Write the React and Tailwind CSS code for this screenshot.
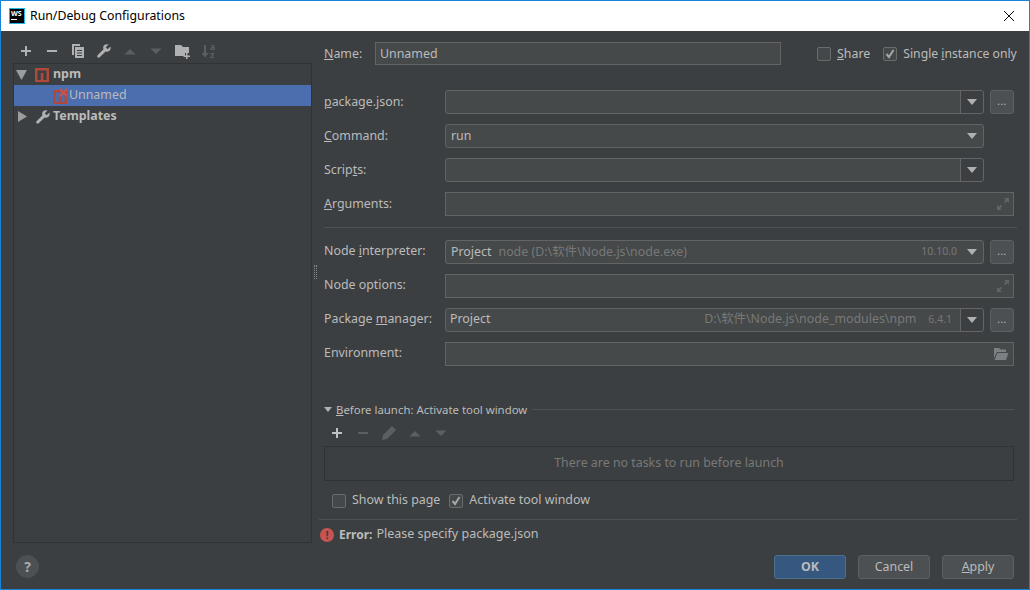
import React from 'react';

const CJK = '"Noto Sans", "Noto Sans CJK SC", sans-serif';

const Tool = ({ children, className = '' }) => (
  <svg width="16" height="16" viewBox="0 0 16 16" className={className}>{children}</svg>
);

const Plus = ({ c = '#afb1b3' }) => <Tool><path d="M7 3h2v4h4v2H9v4H7V9H3V7h4z" fill={c} /></Tool>;
const Minus = ({ c = '#afb1b3' }) => <Tool><path d="M3 7h10v2H3z" fill={c} /></Tool>;
const Up = ({ c = '#5c5f61' }) => <Tool><path d="M2.500 11.500L8 6l5.500 5.500z" fill={c} /></Tool>;
const Down = ({ c = '#5c5f61' }) => <Tool><path d="M2.500 5.500L8 11l5.500-5.500z" fill={c} /></Tool>;
const Wrench = ({ c = '#afb1b3' }) => (
  <Tool><path d="M14.500 3.500l-2.800 2.700-1.900-1.900L12.500 1.600C10.600.9 8.300 1.500 7.500 3.300c-.5 1-.4 2.100 0 3L1.600 12.200c-.6.600-.6 1.500 0 2.100.6.600 1.500.6 2.100 0l5.900-5.900c1 .4 2.200.4 3.100-.1 1.700-.9 2.400-3 1.800-4.800z" fill={c} /></Tool>
);
const Copy = () => (
  <Tool><path d="M2 1h8v2H4v9H2z" fill="#afb1b3" /><path d="M5 4h9v11H5zm2 3v1h5V7zm0 2.500v1h5v-1zm0 2.500v1h5v-1z" fill="#afb1b3" fillRule="evenodd" /></Tool>
);
const FolderPlus = () => (
  <Tool><path d="M1 2h6l2 2h6v6h-4v3H1z" fill="#afb1b3" /><path d="M12 10h1.500v2.500H16V14h-2.500v2H12v-2H9.500v-1.500H12z" fill="#afb1b3" /></Tool>
);
const SortAz = () => (
  <svg width="18" height="18" viewBox="0 0 18 18">
    <path d="M4 3h2v8h2.500L5 15.500 1.500 11H4z" fill="#5c5f61" />
    <text x="10" y="8" fontSize="8.500" fontWeight="700" fontFamily="Noto Sans" fill="#5c5f61">a</text>
    <text x="10" y="16" fontSize="8.500" fontWeight="700" fontFamily="Noto Sans" fill="#5c5f61">z</text>
  </svg>
);
const Npm = () => (
  <svg width="14" height="14" viewBox="0 0 14 14">
    <path d="M0 0h14v14H0zM2.500 2.500V12h9V2.500z" fill="#b0493a" fillRule="evenodd" />
    <path d="M5.800 5h2.600v8H5.800z" fill="#b0493a" />
  </svg>
);
const Expand = () => (
  <svg width="14" height="14" viewBox="0 0 14 14" fill="#5f6465">
    <path d="M8 1h5v5l-1.800-1.800-2 2-1.400-1.400 2-2zM6 13H1V8l1.800 1.800 2-2 1.400 1.400-2 2z" />
  </svg>
);
const Folder = () => (
  <svg width="16" height="14" viewBox="0 0 16 14" fill="#7d8082">
    <path d="M1 1h5l1.500 1.500H13V5H4L1 11z" />
    <path d="M4.500 6H15.500l-2.500 7H1.500z" />
  </svg>
);

const Caret = () => (
  <svg width="12" height="8" viewBox="0 0 12 8"><path d="M1 1h10L6 7z" fill="#aeb0b2" /></svg>
);

const CheckBox = ({ checked }) => (
  <span className="w-[14px] h-[14px] rounded-[2px] border border-[#6b6b6b] bg-[#43494a] flex items-center justify-center shrink-0">
    {checked && (
      <svg width="12" height="12" viewBox="0 0 12 12"><path d="M2.500 6l2.500 3 4.500-7" fill="none" stroke="#a7a7a7" strokeWidth="2" /></svg>
    )}
  </span>
);

const Label = ({ children }) => <div className="w-[121px] shrink-0">{children}</div>;

const Field = ({ children, className = 'w-[569px]', round }) => (
  <div className={`h-[24px] border border-[#646464] bg-[#45494a] flex items-center shrink-0 ${round ? 'rounded-[3px]' : ''} ${className}`}>
    {children}
  </div>
);

const Dots = () => (
  <div className="w-[24px] h-[24px] ml-[6px] rounded-[3px] border border-[#5e6060] bg-[#4c5052] flex items-end justify-center pb-[7px] text-[#bbbbbb] text-[10px] leading-none tracking-[0.5px] shrink-0">...</div>
);

const Row = ({ label, children }) => (
  <div className="flex items-center h-[24px]">
    <Label>{label}</Label>
    {children}
  </div>
);

const Btn = ({ children, primary }) => (
  <div className={`w-[72px] h-[24px] pt-px rounded-[3px] border flex items-center justify-center ${primary ? 'bg-[#365880] border-[#4c708c] font-bold' : 'bg-[#4c5052] border-[#5e6060]'}`}>
    {children}
  </div>
);

const App = () => {
  return (
    <div className="w-[1030px] h-[590px] border border-[#1883d7] flex flex-col bg-[#3c3f41] text-[#bbbbbb] text-[12.4px] overflow-hidden" style={{ fontFamily: CJK }}>
      {/* title bar */}
      <div className="h-[30px] bg-white text-black flex items-center shrink-0 pl-[8px] pr-[14px]">
        <div className="w-[16px] h-[16px] bg-black border border-[#25b5e6] text-white text-[7px] font-bold leading-[9px] px-[1px] shrink-0">
          WS
          <div className="w-[6px] h-px bg-white mt-[1px]" />
        </div>
        <div className="ml-[5px] text-[12.3px]">Run/Debug Configurations</div>
        <svg className="ml-auto" width="12" height="12" viewBox="0 0 12 12"><path d="M1 1l10 10M11 1L1 11" stroke="#111" strokeWidth="1" /></svg>
      </div>

      <div className="flex-1 flex min-h-0">
        {/* left side */}
        <div className="w-[299px] ml-[12px] flex flex-col shrink-0">
          <div className="h-[32px] flex items-center pl-[5px] pt-[7px] gap-[10px] shrink-0">
            <Plus />
            <Minus />
            <Copy />
            <Wrench />
            <Up />
            <Down />
            <FolderPlus />
            <SortAz />
          </div>
          <div className="flex-1 border border-[#323232] pb-[1px]">
            <div className="h-[21px] flex items-center pl-[2px] font-bold">
              <svg width="11" height="10" viewBox="0 0 11 10"><path d="M0 0h11L5.500 10z" fill="#9a9c9e" /></svg>
              <span className="ml-[8px] flex"><Npm /></span>
              <span className="ml-[4px]">npm</span>
            </div>
            <div className="h-[21px] flex items-center pl-[39px] bg-[#4b6eaf] relative">
              <span className="flex mt-[3px]"><Npm /></span>
              <svg className="absolute left-[45px] top-[3px]" width="9" height="9" viewBox="0 0 9 9"><path d="M1 1l7 7M8 1L1 8" stroke="#c75450" strokeWidth="2" /></svg>
              <span className="ml-[2px]">Unnamed</span>
            </div>
            <div className="h-[21px] flex items-center pl-[4px] font-bold">
              <svg width="9" height="11" viewBox="0 0 9 11"><path d="M0 0l9 5.500L0 11z" fill="#9a9c9e" /></svg>
              <span className="ml-[8px] flex"><Wrench /></span>
              <span className="ml-[2px]">Templates</span>
            </div>
          </div>
        </div>

        {/* splitter */}
        <div className="w-[7px] shrink-0 flex items-center justify-center">
          <div className="w-[3px] h-[14px] mb-[30px] border-x border-dotted border-[#8a8a8a]" />
        </div>

        {/* right side */}
        <div className="flex-1 flex flex-col min-w-0 pr-[12px]">
          <div className="pl-[5px]">
            <div className="flex items-center h-[23px] mt-[11px]">
              <div className="w-[51px] shrink-0 pt-px"><u>N</u>ame:</div>
              <div className="w-[406px] h-[23px] border border-[#646464] bg-[#45494a] flex items-center pl-[4px] pt-px shrink-0">Unnamed</div>
              <span className="ml-[36px] mt-[1px]"><CheckBox /></span>
              <span className="ml-[6px] mt-[2px]"><u>S</u>hare</span>
              <span className="ml-[13px] mt-[1px]"><CheckBox checked /></span>
              <span className="ml-[6px] mt-[2px] whitespace-nowrap text-[12.2px]">Single <u>i</u>nstance only</span>
            </div>

            <div className="mt-[25px] flex flex-col gap-[10px]">
              <Row label={<span className="block pt-px"><u>p</u>ackage.json:</span>}>
                <Field round className="w-[539px] justify-end">
                  <div className="w-[23px] h-full border-l border-[#646464] bg-[#3c3f41] rounded-r-[3px] flex items-center justify-center"><Caret /></div>
                </Field>
                <Dots />
              </Row>
              <Row label={<><u>C</u>ommand:</>}>
                <Field round className="w-[539px] pl-[5px] pr-[5px] bg-[#3c3f41] justify-between">
                  <span className="pt-px">run</span>
                  <Caret />
                </Field>
              </Row>
              <Row label={<>Scrip<u>t</u>s:</>}>
                <Field round className="w-[539px] justify-end">
                  <div className="w-[23px] h-full border-l border-[#646464] bg-[#3c3f41] rounded-r-[3px] flex items-center justify-center"><Caret /></div>
                </Field>
              </Row>
              <Row label={<><u>A</u>rguments:</>}>
                <Field className="w-[569px] justify-end pr-[3px]"><Expand /></Field>
              </Row>
            </div>
          </div>

          <div className="h-px bg-[#515151] mt-[11px] ml-[5px]" />

          <div className="pl-[5px] mt-[12px] flex flex-col gap-[10px]">
            <Row label={<>Node <u>i</u>nterpreter:</>}>
              <Field round className="w-[539px] pl-[5px] pr-[5px] bg-[#3c3f41]">
                <span className="pt-px">Project</span>
                <span className="ml-[7px] pt-px text-[#787878]">node (D:\软件\Node.js\node.exe)</span>
                <span className="ml-auto text-[10.5px] text-[#787878]">10.10.0</span>
                <span className="ml-[9px] flex"><Caret /></span>
              </Field>
              <Dots />
            </Row>
            <Row label="Node options:">
              <Field className="w-[569px] justify-end pr-[3px]"><Expand /></Field>
            </Row>
            <Row label={<>Package <u>m</u>anager:</>}>
              <Field round className="w-[539px] pl-[4px]">
                <span>Project</span>
                <span className="ml-auto text-[#787878]">D:\软件\Node.js\node_modules\npm</span>
                <span className="ml-[12px] text-[10.5px] text-[#787878]">6.4.1</span>
                <div className="ml-[8px] w-[23px] h-full border-l border-[#646464] bg-[#3c3f41] rounded-r-[3px] flex items-center justify-center shrink-0"><Caret /></div>
              </Field>
              <Dots />
            </Row>
            <Row label="Environment:">
              <Field className="w-[569px] justify-end pr-[4px]"><Folder /></Field>
            </Row>
          </div>

          <div className="ml-[5px] mt-[36px] h-[16px] flex items-center">
            <svg width="8" height="5" viewBox="0 0 8 5"><path d="M0 0h8L4 5z" fill="#aeb0b2" /></svg>
            <span className="ml-[4px] whitespace-nowrap text-[11.4px]"><u>B</u>efore launch: Activate tool window</span>
            <div className="ml-[5px] flex-1 h-px bg-[#515151] mr-[3px]" />
          </div>

          <div className="ml-[10px] mt-[7px] h-[16px] flex items-center gap-[10px]">
            <Plus c="#c0c2c4" />
            <Minus c="#5c5f61" />
            <svg width="16" height="16" viewBox="0 0 16 16"><path d="M11 1l4 4-9 9-5 1 1-5z" fill="#5c5f61" /></svg>
            <Up />
            <Down />
          </div>

          <div className="ml-[5px] mr-[3px] mt-[5px] h-[35px] border border-[#323232] flex items-center justify-center text-[#787878] shrink-0">
            There are no tasks to run before launch
          </div>

          <div className="ml-[13px] mt-[12px] h-[16px] flex items-center">
            <CheckBox />
            <span className="ml-[6px]">Show this page</span>
            <span className="ml-[9px]"><CheckBox checked /></span>
            <span className="ml-[6px]">Activate tool window</span>
          </div>

          <div className="h-px bg-[#515151] mt-[10px]" />

          <div className="h-[17px] mt-[7px] flex items-center pl-[1px]">
            <span className="w-[14px] h-[14px] rounded-full bg-[#c75450] text-[#3c3f41] font-bold text-[11px] leading-none flex items-center justify-center">!</span>
            <span className="ml-[5px] font-bold text-[12px]">Error:</span>
            <span className="ml-[4px] text-[12.5px]">Please specify package.json</span>
          </div>
        </div>
      </div>

      {/* bottom buttons */}
      <div className="h-[23px] mt-[12px] mb-[11px] flex items-center shrink-0 pl-[15px] pr-[15px]">
        <div className="w-[23px] h-[23px] rounded-full border border-[#4f5355] bg-[#4c5052] flex items-center justify-center font-bold text-[#a9abad] text-[14px]">?</div>
        <div className="ml-auto flex gap-[12px]">
          <Btn primary>OK</Btn>
          <Btn>Cancel</Btn>
          <Btn><span><u>A</u>pply</span></Btn>
        </div>
      </div>
    </div>
  );
};

export default App;
